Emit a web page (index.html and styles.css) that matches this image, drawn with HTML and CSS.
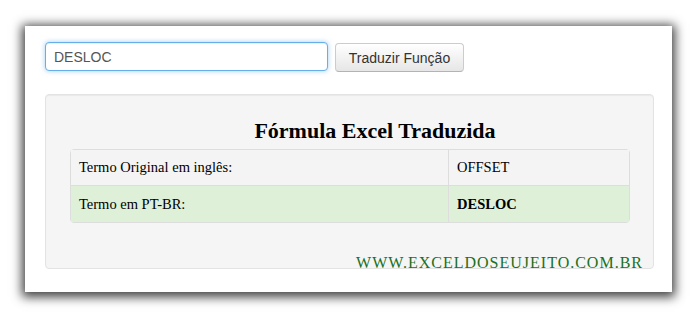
FILE: index.html
```html
<!DOCTYPE html>
<html lang="pt-BR">
<head>
    <meta charset="UTF-8">
    <title>Tradutor de Fórmulas | Excel do Seu Jeito</title>
    <link rel="stylesheet" href="styles.css">
</head>
<body>
    <div class="window">
        <form class="search-form">
            <input class="search-input" type="text" value="DESLOC">
            <button class="search-btn" type="button">Traduzir Função</button>
        </form>

        <div class="well">
            <h2 class="result-title">Fórmula Excel Traduzida</h2>
            <table class="result-table">
                <tr class="row-original">
                    <td class="col-label">Termo Original em inglês:</td>
                    <td class="col-value">OFFSET</td>
                </tr>
                <tr class="row-success">
                    <td class="col-label">Termo em PT-BR:</td>
                    <td class="col-value"><strong>DESLOC</strong></td>
                </tr>
            </table>
        </div>

        <!-- marca d'água do site -->
        <div class="watermark">WWW.EXCELDOSEUJEITO.COM.BR</div>
    </div>
</body>
</html>
```

FILE: styles.css
```css
* {
    box-sizing: border-box;
}

body {
    margin: 0;
    padding: 26px 25px;
    background: #ffffff;
    font-family: 'Liberation Serif', 'Times New Roman', serif;
}

.window {
    position: relative;
    width: 647px;
    height: 266px;
    padding: 16px 20px;
    background: #ffffff;
    box-shadow: 0 2px 10px 3px rgba(0, 0, 0, 0.75);
}

.search-form {
    display: flex;
    align-items: flex-start;
    gap: 7px;
}

.search-input {
    width: 283px;
    height: 29px;
    padding: 0 8px;
    border: 1px solid #66afe9;
    border-radius: 4px;
    box-shadow: inset 0 1px 1px rgba(0, 0, 0, 0.075), 0 0 5px rgba(102, 175, 233, 0.6);
    font-family: 'Liberation Sans', Arial, sans-serif;
    font-size: 14px;
    color: #555555;
    outline: none;
}

.search-btn {
    margin-top: 1px;
    width: 129px;
    height: 29px;
    border: 1px solid #cccccc;
    border-bottom-color: #b3b3b3;
    border-radius: 4px;
    background: linear-gradient(#ffffff, #e6e6e6);
    font-family: 'Liberation Sans', Arial, sans-serif;
    font-size: 14px;
    color: #333333;
}

.well {
    margin-top: 22px;
    width: 609px;
    height: 175px;
    padding: 23px 23px 0 24px;
    background: #f5f5f5;
    border: 1px solid #e3e3e3;
    border-radius: 4px;
    box-shadow: inset 0 1px 1px rgba(0, 0, 0, 0.05);
}

.result-title {
    margin: 0 0 6px;
    padding-left: 50px;
    text-align: center;
    font-size: 22px;
    line-height: 25px;
    font-weight: bold;
    color: #000000;
}

.result-table {
    width: 560px;
    border-collapse: separate;
    border-spacing: 0;
    border: 1px solid #dddddd;
    border-radius: 4px;
    font-size: 14.5px;
    color: #000000;
}

.result-table td {
    height: 36px;
    padding: 0 8px;
    vertical-align: middle;
}

.row-original td {
    background: #f4f4f4;
    border-bottom: 1px solid #dddddd;
}

.row-success td {
    background: #dff0d8;
}

.col-label {
    width: 378px;
    border-right: 1px solid #dddddd;
}

.watermark {
    position: absolute;
    right: 29px;
    top: 228px;
    font-family: 'Liberation Serif', serif;
    font-size: 16px;
    letter-spacing: 1px;
    color: #1c701c;
}
```
